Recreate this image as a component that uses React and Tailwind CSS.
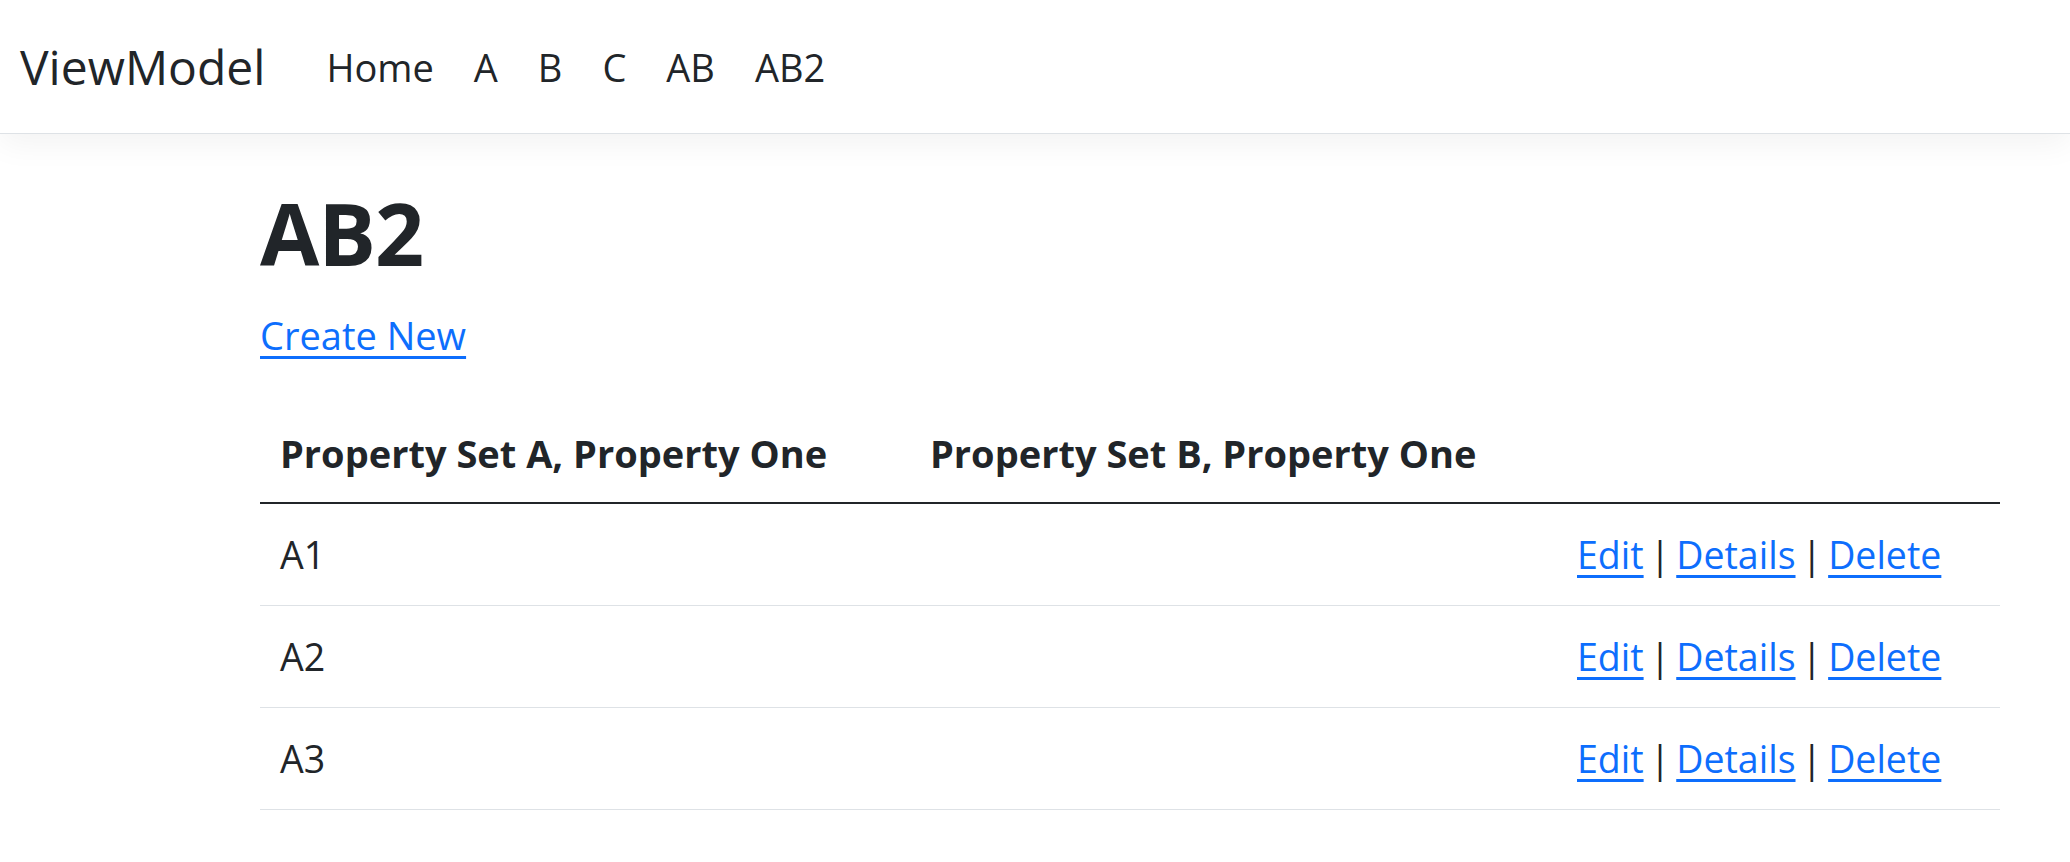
import React from 'react';

const navLinks = ['Home', 'A', 'B', 'C', 'AB', 'AB2'];

const rows = [
  { a: 'A1', b: '' },
  { a: 'A2', b: '' },
  { a: 'A3', b: '' },
];

const Navbar = () => (
  <header className="relative z-10 h-[134px] bg-white border-b border-[#dee2e6] shadow-[0_10px_30px_rgba(0,0,0,0.05)]">
    <nav className="flex h-full items-center pl-[20px]">
      <a href="#" className="text-[48px] leading-[75px] text-[#212529] no-underline">
        ViewModel
      </a>
      <ul className="ml-[61px] flex items-center gap-[40px]">
        {navLinks.map((link) => (
          <li key={link}>
            <a href="#" className="text-[38px] leading-[58px] text-[#212529]">
              {link}
            </a>
          </li>
        ))}
      </ul>
    </nav>
  </header>
);

const Sep = () => <span className="mx-[6px] text-[#212529]">|</span>;

const Actions = () => (
  <span className="whitespace-nowrap">
    <a href="#" className="text-[#0d6efd] underline decoration-[3px] underline-offset-[6px]">Edit</a>
    <Sep />
    <a href="#" className="text-[#0d6efd] underline decoration-[3px] underline-offset-[6px]">Details</a>
    <Sep />
    <a href="#" className="text-[#0d6efd] underline decoration-[3px] underline-offset-[6px]">Delete</a>
  </span>
);

export default function App() {
  return (
    <div className="min-h-[862px] bg-white text-[#212529] font-['Open_Sans',sans-serif]">
      <Navbar />
      <main className="ml-[260px] w-[1740px]">
        <h1 className="mt-[56px] text-[86px] leading-[86px] font-bold tracking-[-1px]">AB2</h1>
        <p className="mt-[31px]">
          <a href="#" className="text-[38px] leading-[57px] text-[#0d6efd] underline decoration-[3px] underline-offset-[6px]">
            Create New
          </a>
        </p>
        <table className="mt-[39px] w-full border-collapse text-[37.5px] leading-[61px]">
          <thead>
            <tr className="border-b-2 border-[#212529]">
              <th className="w-[652px] pl-[20px] pt-[20px] pb-[18px] text-left text-[38px] font-bold">
                Property Set A, Property One
              </th>
              <th className="w-[648px] pl-[18px] pt-[20px] pb-[18px] text-left text-[38px] font-bold">
                Property Set B, Property One
              </th>
              <th className="pt-[20px] pb-[18px]"></th>
            </tr>
          </thead>
          <tbody>
            {rows.map((row) => (
              <tr key={row.a} className="border-b border-[#dee2e6]">
                <td className="pl-[20px] py-[20px]">{row.a}</td>
                <td className="pl-[18px] py-[20px]">{row.b}</td>
                <td className="pl-[17px] py-[20px]">
                  <Actions />
                </td>
              </tr>
            ))}
          </tbody>
        </table>
      </main>
    </div>
  );
}
